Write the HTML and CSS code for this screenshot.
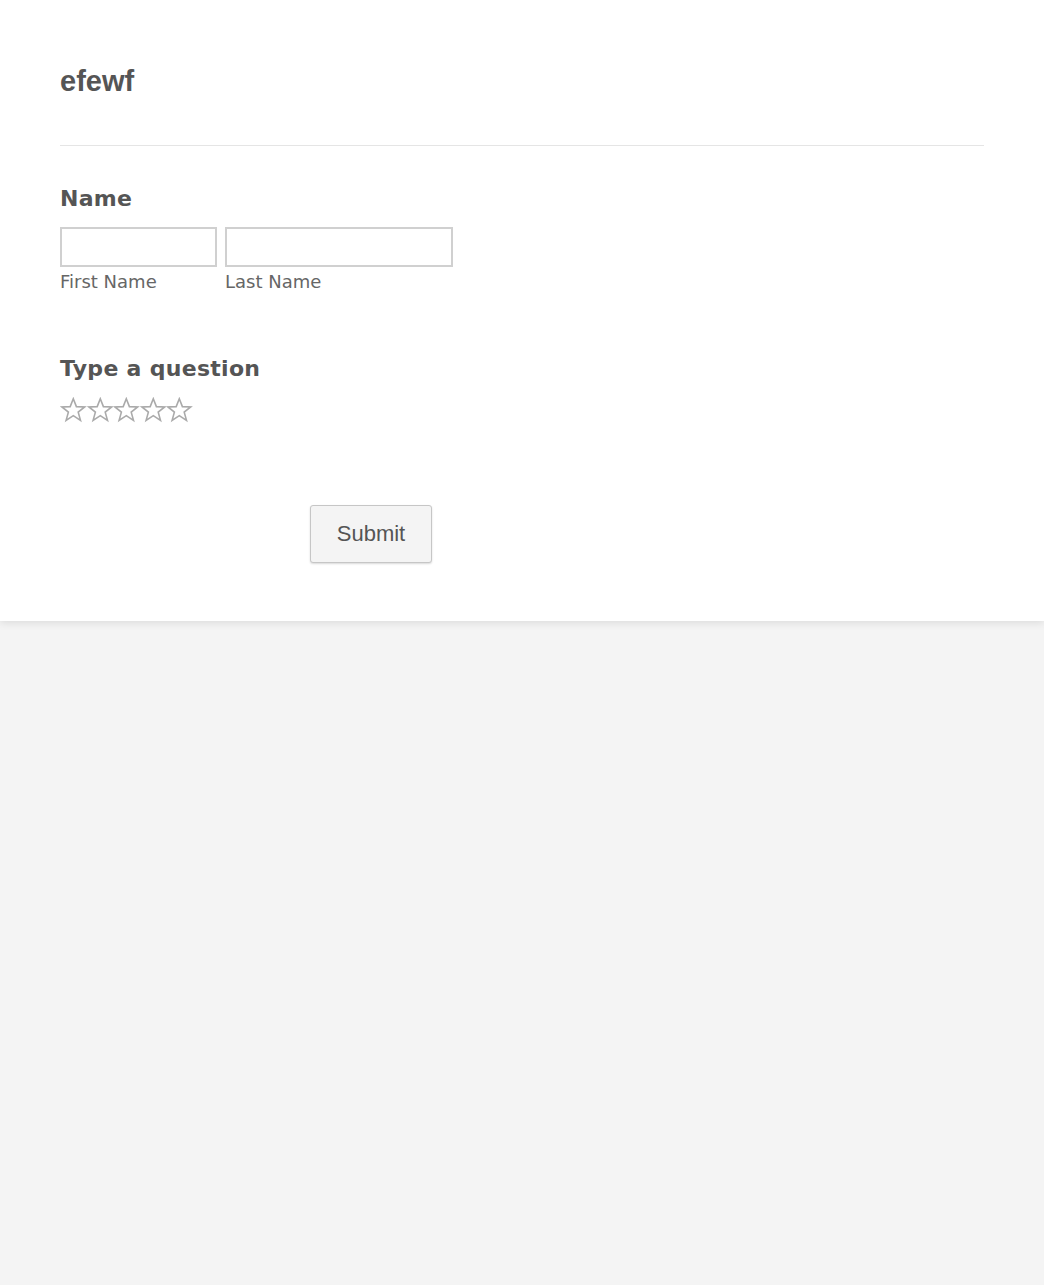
FILE: index.html
```html
<!DOCTYPE html>
<html>
<head>
<meta charset="utf-8">
<link rel="stylesheet" href="styles.css">
</head>
<body>
<div class="card">
  <h1 class="title">efewf</h1>
  <hr class="divider">
  <div class="field">
    <div class="label">Name</div>
    <div class="name-row">
      <div class="sub">
        <input class="input first" type="text">
        <span class="sublabel">First Name</span>
      </div>
      <div class="sub">
        <input class="input last" type="text">
        <span class="sublabel">Last Name</span>
      </div>
    </div>
  </div>
  <div class="field q">
    <div class="label">Type a question</div>
    <div class="stars">
      <svg class="star" viewBox="0 0 26 26"><path d="M13 1.8 L16.1 9.6 L24.4 9.9 L17.9 15.1 L20.2 23.3 L13 18.6 L5.8 23.3 L8.1 15.1 L1.6 9.9 L9.9 9.6 Z"/></svg>
      <svg class="star" viewBox="0 0 26 26"><path d="M13 1.8 L16.1 9.6 L24.4 9.9 L17.9 15.1 L20.2 23.3 L13 18.6 L5.8 23.3 L8.1 15.1 L1.6 9.9 L9.9 9.6 Z"/></svg>
      <svg class="star" viewBox="0 0 26 26"><path d="M13 1.8 L16.1 9.6 L24.4 9.9 L17.9 15.1 L20.2 23.3 L13 18.6 L5.8 23.3 L8.1 15.1 L1.6 9.9 L9.9 9.6 Z"/></svg>
      <svg class="star" viewBox="0 0 26 26"><path d="M13 1.8 L16.1 9.6 L24.4 9.9 L17.9 15.1 L20.2 23.3 L13 18.6 L5.8 23.3 L8.1 15.1 L1.6 9.9 L9.9 9.6 Z"/></svg>
      <svg class="star" viewBox="0 0 26 26"><path d="M13 1.8 L16.1 9.6 L24.4 9.9 L17.9 15.1 L20.2 23.3 L13 18.6 L5.8 23.3 L8.1 15.1 L1.6 9.9 L9.9 9.6 Z"/></svg>
    </div>
  </div>
  <div class="actions">
    <button class="submit" type="button">Submit</button>
  </div>
</div>
</body>
</html>
```
FILE: styles.css
```css
html, body {
  margin: 0;
  padding: 0;
  background: #f4f4f4;
  height: 100%;
}
.card {
  background: #fff;
  padding: 63px 60px 58px 60px;
  box-shadow: 0 2px 8px rgba(0,0,0,0.10);
  color: #555;
}
.title {
  margin: 0;
  font-family: "Liberation Sans", Arial, sans-serif;
  font-weight: bold;
  font-size: 29px;
  line-height: 36px;
  color: #555;
}
.divider {
  margin: 46px 0 0 0;
  border: 0;
  border-top: 1px solid #e5e5e5;
  height: 0;
}
.field {
  margin-top: 39px;
  font-family: "DejaVu Sans", Verdana, sans-serif;
}
.field.q {
  margin-top: 60px;
}
.label {
  font-weight: bold;
  font-size: 22px;
  letter-spacing: 0.3px;
  line-height: 28px;
  color: #555;
}
.name-row {
  display: flex;
  gap: 8px;
  margin-top: 14px;
}
.sub {
  display: flex;
  flex-direction: column;
}
.input {
  box-sizing: border-box;
  height: 40px;
  border: 2px solid #d0d0d0;
  background: #fff;
  margin: 0;
  padding: 0;
  outline: none;
}
.input.first { width: 157px; }
.input.last { width: 228px; }
.sublabel {
  font-size: 18px;
  line-height: 26px;
  color: #666;
  margin-top: 2px;
}
.stars {
  display: flex;
  margin-top: 14px;
}
.star {
  width: 26.6px;
  height: 26px;
  fill: #fff;
  stroke: #aaa;
  stroke-width: 1.6;
  stroke-linejoin: miter;
}
.actions {
  margin-top: 82px;
  padding-left: 250px;
}
.submit {
  width: 122px;
  height: 58px;
  font-family: "Liberation Sans", Arial, sans-serif;
  font-size: 22px;
  color: #555;
  background: #f4f4f4;
  border: 1px solid #c6c6c6;
  border-radius: 3px;
  box-shadow: 0 1px 2px rgba(0,0,0,0.15);
  padding: 0;
}
```
